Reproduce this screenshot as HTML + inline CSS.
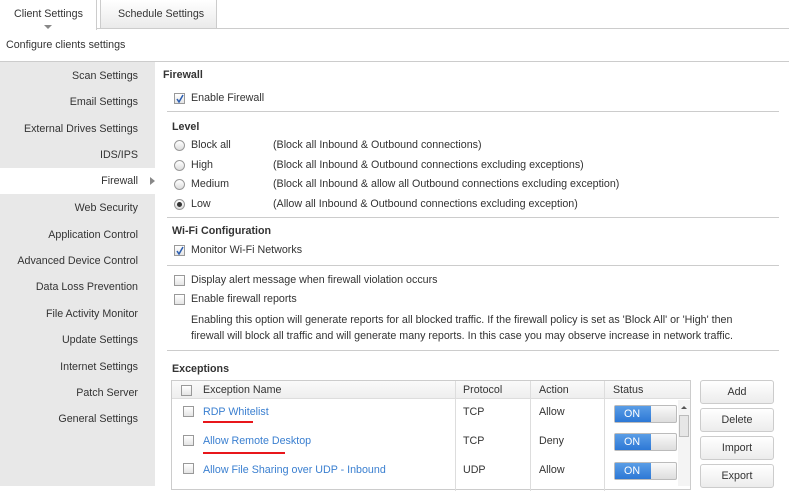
<!DOCTYPE html><html><head><style>
*{margin:0;padding:0;box-sizing:border-box}
body{width:789px;height:486px;overflow:hidden;background:#fff;font-family:"Liberation Sans",sans-serif;font-size:10.7px;color:#333;position:relative}
.a{position:absolute;white-space:nowrap}
.cb{position:absolute;width:11px;height:11px;border:1px solid #999;background:linear-gradient(#fff,#e4e4e4)}
.rd{position:absolute;width:11px;height:11px;border:1px solid #999;border-radius:50%;background:linear-gradient(#fff,#ddd)}
.hl{position:absolute;height:1px;background:#ccc}
.side{position:absolute;right:651px;text-align:right}
.btn{position:absolute;left:700px;width:74px;height:24px;border:1px solid #ccc;border-radius:3px;background:linear-gradient(#fff,#ececec);text-align:center;line-height:22px}
.tg{position:absolute;left:614px;width:63px;height:18px;border:1px solid #bbb;border-radius:2px;background:linear-gradient(#fafafa,#ddd)}
.tg b{position:absolute;left:0;top:0;width:36px;height:16px;background:linear-gradient(#5a9de6,#2d78d6);color:#fff;font-weight:normal;line-height:16px;padding-left:9px}
.lk{color:#3a7fd0}
</style></head><body>
<div class="a" style="left:0;top:0;width:789px;height:29px;background:#fff;border-bottom:1px solid #ccc"></div>
<div class="a" style="left:0;top:0;width:97px;height:30px;background:#fff;border-right:1px solid #ccc"></div>
<div class="a" style="left:100px;top:0;width:117px;height:29px;background:linear-gradient(#fff,#eaeaea);border:1px solid #ccc;border-top:none"></div>
<div class="a" style="left:14px;top:8px;color:#333">Client Settings</div>
<div class="a" style="left:118px;top:8px">Schedule Settings</div>
<div class="a" style="left:44px;top:25px;border:4px solid transparent;border-top:4px solid #888;width:0;height:0"></div>
<div class="a" style="left:6px;top:39px">Configure clients settings</div>
<div class="hl" style="left:0;top:61px;width:789px"></div>
<div class="a" style="left:0;top:62px;width:155px;height:424px;background:#e8e8e8"></div>
<div class="a" style="left:0;top:168px;width:155px;height:26px;background:#fff"></div>
<div class="a" style="left:150px;top:177px;border:4px solid transparent;border-left:5px solid #888;width:0;height:0"></div>
<div class="side" style="top:70px">Scan Settings</div>
<div class="side" style="top:96px">Email Settings</div>
<div class="side" style="top:123px">External Drives Settings</div>
<div class="side" style="top:149px">IDS/IPS</div>
<div class="side" style="top:175px">Firewall</div>
<div class="side" style="top:202px">Web Security</div>
<div class="side" style="top:229px">Application Control</div>
<div class="side" style="top:255px">Advanced Device Control</div>
<div class="side" style="top:281px">Data Loss Prevention</div>
<div class="side" style="top:308px">File Activity Monitor</div>
<div class="side" style="top:334px">Update Settings</div>
<div class="side" style="top:361px">Internet Settings</div>
<div class="side" style="top:387px">Patch Server</div>
<div class="side" style="top:413px">General Settings</div>

<div class="a" style="left:163px;top:69px;font-weight:bold">Firewall</div>
<div class="cb" style="left:174px;top:93px"></div><svg class="a" style="left:175px;top:94px" width="10" height="10"><path d="M2 5l2 3 4-7" stroke="#2a5db0" stroke-width="1.5" fill="none"/></svg>
<div class="a" style="left:191px;top:92px">Enable Firewall</div>
<div class="hl" style="left:167px;top:111px;width:612px"></div>
<div class="a" style="left:172px;top:121px;font-weight:bold">Level</div>
<div class="rd" style="left:174px;top:140px"></div><div class="a" style="left:191px;top:139px">Block all</div><div class="a" style="left:273px;top:139px">(Block all Inbound &amp; Outbound connections)</div>
<div class="rd" style="left:174px;top:160px"></div><div class="a" style="left:191px;top:159px">High</div><div class="a" style="left:273px;top:159px">(Block all Inbound &amp; Outbound connections excluding exceptions)</div>
<div class="rd" style="left:174px;top:179px"></div><div class="a" style="left:191px;top:178px">Medium</div><div class="a" style="left:273px;top:178px">(Block all Inbound &amp; allow all Outbound connections excluding exception)</div>
<div class="rd" style="left:174px;top:199px"></div><div class="a" style="left:177px;top:202px;width:5px;height:5px;border-radius:50%;background:#333"></div><div class="a" style="left:191px;top:198px">Low</div><div class="a" style="left:273px;top:198px">(Allow all Inbound &amp; Outbound connections excluding exception)</div>
<div class="hl" style="left:167px;top:217px;width:612px"></div>
<div class="a" style="left:172px;top:225px;font-weight:bold">Wi-Fi Configuration</div>
<div class="cb" style="left:174px;top:245px"></div><svg class="a" style="left:175px;top:246px" width="10" height="10"><path d="M2 5l2 3 4-7" stroke="#2a5db0" stroke-width="1.5" fill="none"/></svg>
<div class="a" style="left:191px;top:244px">Monitor Wi-Fi Networks</div>
<div class="hl" style="left:167px;top:265px;width:612px"></div>
<div class="cb" style="left:174px;top:275px"></div><div class="a" style="left:191px;top:274px">Display alert message when firewall violation occurs</div>
<div class="cb" style="left:174px;top:294px"></div><div class="a" style="left:191px;top:293px">Enable firewall reports</div>
<div class="a" style="left:191px;top:314px">Enabling this option will generate reports for all blocked traffic. If the firewall policy is set as 'Block All' or 'High' then</div>
<div class="a" style="left:191px;top:330px">firewall will block all traffic and will generate many reports. In this case you may observe increase in network traffic.</div>
<div class="hl" style="left:167px;top:350px;width:612px"></div>
<div class="a" style="left:172px;top:363px;font-weight:bold">Exceptions</div>
<div class="a" style="left:171px;top:380px;width:520px;height:110px;border:1px solid #ccc"></div>
<div class="a" style="left:172px;top:381px;width:518px;height:18px;background:linear-gradient(#fafafa,#eee);border-bottom:1px solid #ddd"></div>
<div class="a" style="left:455px;top:381px;width:1px;height:110px;background:#ddd"></div>
<div class="a" style="left:530px;top:381px;width:1px;height:110px;background:#ddd"></div>
<div class="a" style="left:604px;top:381px;width:1px;height:110px;background:#ddd"></div>
<div class="cb" style="left:181px;top:385px"></div><div class="a" style="left:203px;top:384px">Exception Name</div>
<div class="a" style="left:463px;top:384px">Protocol</div><div class="a" style="left:539px;top:384px">Action</div><div class="a" style="left:613px;top:384px">Status</div>
<div class="cb" style="left:183px;top:406px"></div><div class="a lk" style="left:203px;top:406px">RDP Whitelist</div><div class="a" style="left:463px;top:406px">TCP</div><div class="a" style="left:539px;top:406px">Allow</div>
<div class="a" style="left:203px;top:421px;width:50px;height:2px;background:#e8161b"></div>
<div class="cb" style="left:183px;top:435px"></div><div class="a lk" style="left:203px;top:435px">Allow Remote Desktop</div><div class="a" style="left:463px;top:435px">TCP</div><div class="a" style="left:539px;top:435px">Deny</div>
<div class="a" style="left:203px;top:452px;width:82px;height:2px;background:#e8161b"></div>
<div class="cb" style="left:183px;top:463px"></div><div class="a lk" style="left:203px;top:464px">Allow File Sharing over UDP - Inbound</div><div class="a" style="left:463px;top:464px">UDP</div><div class="a" style="left:539px;top:464px">Allow</div>
<div class="tg" style="top:405px"><b>ON</b></div>
<div class="tg" style="top:433px"><b>ON</b></div>
<div class="tg" style="top:462px"><b>ON</b></div>
<div class="a" style="left:678px;top:400px;width:12px;height:86px;background:#f4f4f4"></div>
<div class="a" style="left:681px;top:403px;border:3px solid transparent;border-bottom:3px solid #555;width:0;height:0"></div>
<div class="a" style="left:679px;top:415px;width:10px;height:22px;border:1px solid #bbb;background:#e6e6e6"></div>
<div class="btn" style="top:380px">Add</div>
<div class="btn" style="top:408px">Delete</div>
<div class="btn" style="top:436px">Import</div>
<div class="btn" style="top:464px">Export</div>
</body></html>
